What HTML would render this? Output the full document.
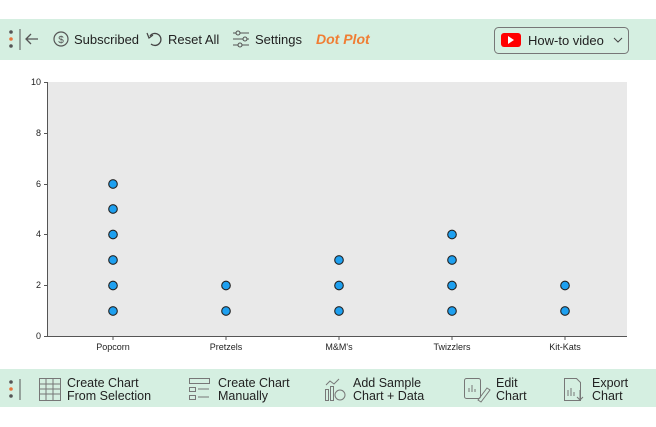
<!DOCTYPE html>
<html><head><style>
body{margin:0;width:656px;height:427px;background:#fff;font-family:"Liberation Sans",sans-serif;position:relative;overflow:hidden}
.bar{position:absolute;left:0;width:656px;background:#d5efe1}
.t{position:absolute;font-size:13px;color:#222;white-space:nowrap}
.b{position:absolute;font-size:12.5px;color:#222;line-height:13px}
</style></head><body>
<div class="bar" style="top:19px;height:41px"></div>
<div class="bar" style="top:369px;height:38px"></div>
<svg style="position:absolute;left:0;top:0" width="656" height="427">
<!-- top bar icons -->
<circle cx="11" cy="32" r="1.8" fill="#555"/><circle cx="11" cy="39" r="1.8" fill="#e8743b"/><circle cx="11" cy="46" r="1.8" fill="#555"/>
<line x1="20" y1="29" x2="20" y2="50" stroke="#555"/>
<path d="M38 39H27M31 34l-5 5 5 5" stroke="#555" fill="none" stroke-width="1.3"/>
<circle cx="61" cy="39" r="7" stroke="#555" fill="none" stroke-width="1.2"/>
<text x="61" y="43" font-size="10" text-anchor="middle" fill="#555" font-family="Liberation Sans">$</text>
<path d="M150 36a6 6 0 1 1 1 8" stroke="#444" fill="none" stroke-width="1.3"/><path d="M147 33l2 5 4-3" stroke="#444" fill="none" stroke-width="1.2"/>
<g stroke="#555" stroke-width="1.1" fill="none"><path d="M233 33h16M233 39h16M233 45h16"/><circle cx="238" cy="33" r="2" fill="#d5efe1"/><circle cx="245" cy="39" r="2" fill="#d5efe1"/><circle cx="240" cy="45" r="2" fill="#d5efe1"/></g>
<rect x="494.5" y="27.5" width="134" height="26" rx="4" fill="none" stroke="#777"/>
<rect x="501" y="33" width="20" height="14" rx="3" fill="#f00"/><path d="M508 36v8l6-4z" fill="#fff"/>
<path d="M614 38l4 4 4-4" stroke="#444" fill="none"/>
<!-- chart -->
<rect x="47" y="82" width="580" height="254" fill="#e9e9e9"/>
<line x1="47.5" y1="82" x2="47.5" y2="336" stroke="#555"/>
<line x1="47" y1="336.5" x2="627" y2="336.5" stroke="#555"/>
<g font-size="9" fill="#222" text-anchor="end" font-family="Liberation Sans">
<text x="41" y="85">10</text><text x="41" y="136">8</text><text x="41" y="187">6</text><text x="41" y="237">4</text><text x="41" y="288">2</text><text x="41" y="339">0</text></g>
<g stroke="#555"><path d="M44 82.5h3M44 133.5h3M44 184.5h3M44 234.5h3M44 285.5h3M44 336.5h3M113 336v4M226 336v4M339 336v4M452 336v4M565 336v4"/></g>
<g font-size="9" fill="#222" text-anchor="middle" font-family="Liberation Sans">
<text x="113" y="350">Popcorn</text><text x="226" y="350">Pretzels</text><text x="339" y="350">M&amp;M's</text><text x="452" y="350">Twizzlers</text><text x="565" y="350">Kit-Kats</text></g>
<g fill="#1ea0f0" stroke="#222" stroke-width="1.1">
<circle cx="113" cy="311" r="4.3"/><circle cx="113" cy="285.5" r="4.3"/><circle cx="113" cy="260" r="4.3"/><circle cx="113" cy="234.5" r="4.3"/><circle cx="113" cy="209" r="4.3"/><circle cx="113" cy="184" r="4.3"/>
<circle cx="226" cy="311" r="4.3"/><circle cx="226" cy="285.5" r="4.3"/>
<circle cx="339" cy="311" r="4.3"/><circle cx="339" cy="285.5" r="4.3"/><circle cx="339" cy="260" r="4.3"/>
<circle cx="452" cy="311" r="4.3"/><circle cx="452" cy="285.5" r="4.3"/><circle cx="452" cy="260" r="4.3"/><circle cx="452" cy="234.5" r="4.3"/>
<circle cx="565" cy="311" r="4.3"/><circle cx="565" cy="285.5" r="4.3"/></g>
<!-- bottom icons -->
<circle cx="11" cy="382" r="1.8" fill="#555"/><circle cx="11" cy="389" r="1.8" fill="#e8743b"/><circle cx="11" cy="396" r="1.8" fill="#555"/>
<line x1="20" y1="379" x2="20" y2="400" stroke="#555"/>
<g stroke="#777" fill="none"><rect x="39.5" y="378.5" width="21" height="22"/><path d="M39 384h22M39 389h22M39 394h22M46 378v22M53 378v22"/></g>
<g stroke="#777" fill="none"><rect x="189.5" y="378.5" width="20" height="5"/><rect x="189.5" y="387.5" width="6" height="4"/><rect x="189.5" y="395.5" width="6" height="4"/><path d="M198 389h11M198 397h11"/></g>
<g stroke="#777" fill="none"><path d="M326 385l4-4 4 3 5-5"/><rect x="325.5" y="389.5" width="3" height="11"/><rect x="330.5" y="386.5" width="3" height="14"/><circle cx="340" cy="395" r="5"/></g>
<g stroke="#777" fill="none"><rect x="464.5" y="378.5" width="16" height="20" rx="2"/><path d="M469 392v-4M472 392v-7M475 392v-3M478 400l9-12 3 2-9 12z"/></g>
<g stroke="#777" fill="none"><path d="M564.5 378.5h12l4 4v18h-16z"/><path d="M568 396v-6M571 396v-8M574 396v-4M580 390v10M577 397l3 3 3-3"/></g>
</svg>
<div class="t" style="left:74px;top:32px">Subscribed</div>
<div class="t" style="left:168px;top:32px">Reset All</div>
<div class="t" style="left:255px;top:32px">Settings</div>
<div class="t" style="left:316px;top:31px;color:#f07d33;font-weight:bold;font-style:italic;font-size:14px">Dot Plot</div>
<div class="t" style="left:528px;top:33px">How-to video</div>
<div class="b" style="left:67px;top:377px">Create Chart<br>From Selection</div>
<div class="b" style="left:218px;top:377px">Create Chart<br>Manually</div>
<div class="b" style="left:353px;top:377px">Add Sample<br>Chart + Data</div>
<div class="b" style="left:496px;top:377px">Edit<br>Chart</div>
<div class="b" style="left:592px;top:377px">Export<br>Chart</div>
</body></html>
